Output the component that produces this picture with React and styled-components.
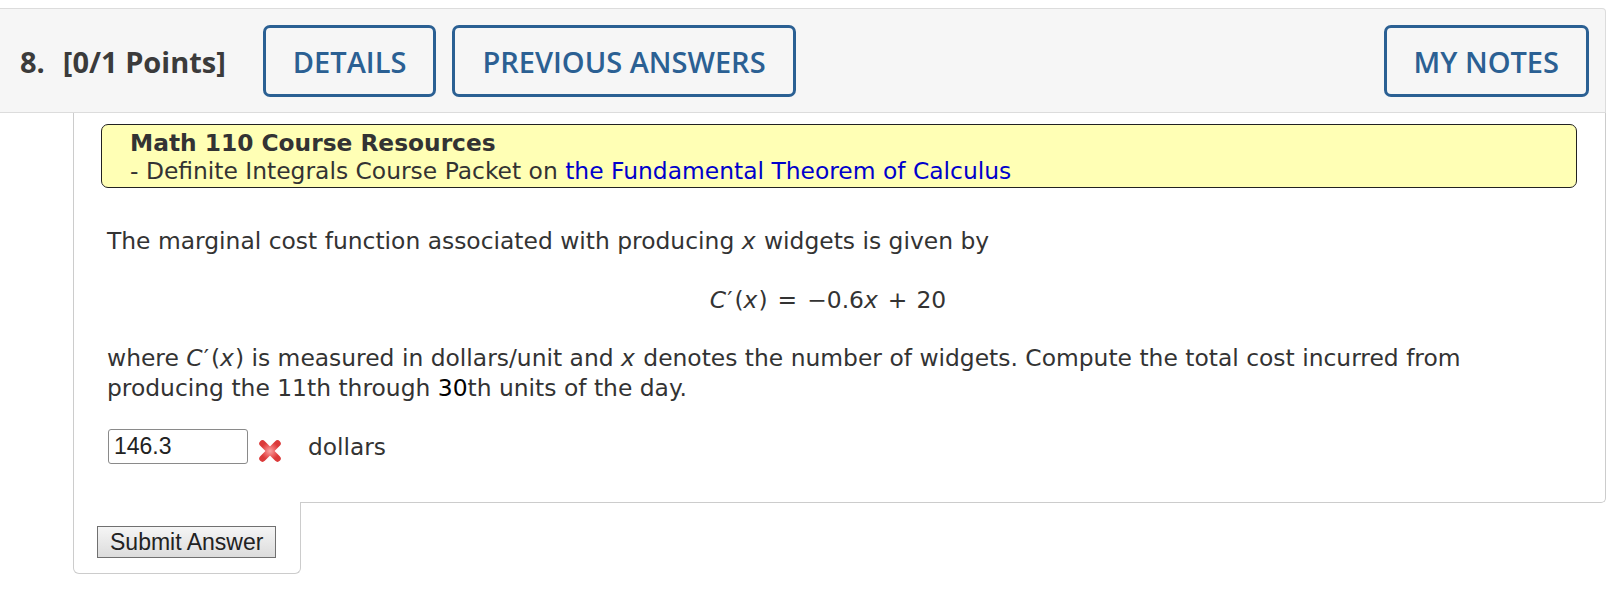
import React from "react";
import styled, { createGlobalStyle } from "styled-components";

const Global = createGlobalStyle`
  html, body { margin: 0; padding: 0; background: #ffffff; }
  body { font-family: "DejaVu Sans", Verdana, sans-serif; }
`;

const Page = styled.div`
  padding: 8px 16px 0 0;
  width: 1606px;
`;

const Header = styled.div`
  display: flex;
  align-items: center;
  background: #f6f6f6;
  border: 1px solid #dcdcdc;
  border-left: none;
  border-top-right-radius: 4px;
  padding: 16px 16px 15px 20px;
  font-family: "Open Sans", sans-serif;
`;

const QNum = styled.span`
  font-size: 29px;
  font-weight: 700;
  color: #3b3b3b;
`;

const Points = styled.span`
  font-size: 29px;
  font-weight: 700;
  color: #3b3b3b;
  margin-left: 18px;
  margin-right: 37px;
`;

const HeaderButton = styled.button`
  display: flex;
  align-items: center;
  box-sizing: border-box;
  height: 72px;
  padding: 0 27px;
  background: transparent;
  border: 3px solid #2b6093;
  border-radius: 7px;
  color: #2b6093;
  font-family: "Open Sans", sans-serif;
  font-size: 29px;
  font-weight: 600;
  cursor: pointer;
  margin-left: ${(p) => (p.$push ? "auto" : p.$first ? "0" : "16px")};
`;

const Question = styled.div`
  display: flex;
  flex-direction: column;
  align-items: flex-start;
`;

const ContentBox = styled.div`
  align-self: stretch;
  margin-left: 73px;
  border: 1px solid #cccccc;
  border-top: none;
  border-bottom-right-radius: 5px;
  padding: 11px 28px 38px 27px;
  color: #333333;
  font-family: "DejaVu Sans", Verdana, sans-serif;
  font-size: 23.4px;
`;

const Resources = styled.div`
  background: #ffffb5;
  border: 1px solid #222222;
  border-radius: 7px;
  padding: 3px 10px 1px 28px;
  line-height: 29px;
`;

const ResTitle = styled.div`
  font-weight: 700;
  font-size: 23.3px;
`;

const Link = styled.a`
  color: #0000cc;
  text-decoration: none;
`;

const Para = styled.p`
  margin: ${(p) => p.$top}px 28px 0 6px;
  line-height: 30px;
`;

const Formula = styled.div`
  margin: 29px 28px 0 6px;
  line-height: 30px;
  text-align: center;
`;

const Var = styled.i`
  font-style: italic;
  padding-right: 1px;
`;

const Prime = styled.span`
  margin: 0 2px 0 0;
`;

const Op = styled.span`
  margin: 0 ${(p) => p.$space}px;
`;

const Dark = styled.span`
  color: #000000;
`;

const AnswerRow = styled.div`
  display: flex;
  align-items: center;
  margin: 26px 0 0 7px;
`;

const AnswerInput = styled.input`
  box-sizing: border-box;
  width: 140px;
  height: 35px;
  border: 1px solid #8a8a8a;
  border-radius: 3px;
  padding: 0 5px;
  font-family: "Liberation Sans", Arial, sans-serif;
  font-size: 23px;
  color: #222222;
  background: #ffffff;
  outline: none;
`;

const WrongIcon = styled.svg`
  width: 24px;
  height: 24px;
  margin-left: 10px;
  margin-top: 9px;
`;

const Unit = styled.span`
  margin-left: 26px;
  line-height: 30px;
  font-size: 23.3px;
`;

const SubmitBox = styled.div`
  box-sizing: border-box;
  width: 228px;
  margin-left: 73px;
  margin-top: -1px;
  background: #ffffff;
  border: 1px solid #cccccc;
  border-top: none;
  border-radius: 0 0 6px 6px;
  padding: 24px 0 15px 23px;
`;

const SubmitButton = styled.button`
  box-sizing: border-box;
  height: 32px;
  padding: 0 12px;
  border: 1px solid #707070;
  border-radius: 0;
  background: linear-gradient(#f5f5f5, #dcdcdc);
  color: #222222;
  font-family: "Liberation Sans", Arial, sans-serif;
  font-size: 23px;
  line-height: 30px;
  cursor: pointer;
`;

function XMark() {
  return (
    <WrongIcon viewBox="0 0 24 24" aria-label="incorrect">
      <defs>
        <radialGradient id="xg" cx="50%" cy="50%" r="60%">
          <stop offset="0%" stopColor="#f7a3a3" />
          <stop offset="60%" stopColor="#ec6161" />
          <stop offset="100%" stopColor="#db3a3a" />
        </radialGradient>
      </defs>
      <g stroke="url(#xg)" strokeWidth="6.5" strokeLinecap="round">
        <line x1="4.5" y1="4.5" x2="19.5" y2="19.5" />
        <line x1="19.5" y1="4.5" x2="4.5" y2="19.5" />
      </g>
    </WrongIcon>
  );
}

export default function App() {
  return (
    <Page>
      <Global />
      <Header>
        <QNum>8.</QNum>
        <Points>[0/1 Points]</Points>
        <HeaderButton $first>DETAILS</HeaderButton>
        <HeaderButton>PREVIOUS ANSWERS</HeaderButton>
        <HeaderButton $push>MY NOTES</HeaderButton>
      </Header>
      <Question>
        <ContentBox>
          <Resources>
            <ResTitle>Math 110 Course Resources</ResTitle>
            <div>
              - Definite Integrals Course Packet on{" "}
              <Link href="#">the Fundamental Theorem of Calculus</Link>
            </div>
          </Resources>
          <Para $top={38}>
            The marginal cost function associated with producing <Var>x</Var> widgets is given by
          </Para>
          <Formula>
            <Var>C</Var>
            <Prime>′</Prime>(<Var>x</Var>)<Op $space={10}>=</Op>−0.6<Var>x</Var>
            <Op $space={9}>+</Op>20
          </Formula>
          <Para $top={28}>
            where <Var>C</Var>
            <Prime>′</Prime>(<Var>x</Var>) is measured in dollars/unit and <Var>x</Var> denotes the
            number of widgets. Compute the total cost incurred from producing the 11th through{" "}
            <Dark>30</Dark>th units of the day.
          </Para>
          <AnswerRow>
            <AnswerInput readOnly defaultValue="146.3" />
            <XMark />
            <Unit>dollars</Unit>
          </AnswerRow>
        </ContentBox>
        <SubmitBox>
          <SubmitButton>Submit Answer</SubmitButton>
        </SubmitBox>
      </Question>
    </Page>
  );
}
